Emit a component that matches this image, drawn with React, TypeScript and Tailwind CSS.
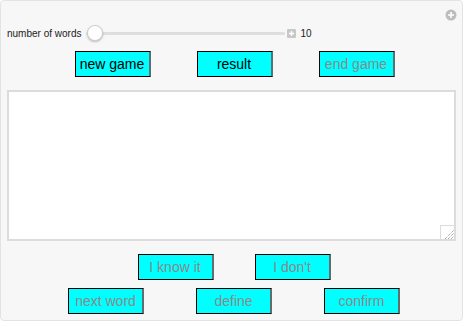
import React from "react";

function Btn({ label, active }: { label: string; active?: boolean }) {
    return (
        <div
            className={`w-[76px] h-[26px] flex items-center justify-center bg-[#00ffff] border border-black border-r-2 border-r-[#5f6f6f] text-[14px] ${active ? "text-black" : "text-[#8a8a8a]"}`}
        >
            {label}
        </div>
    );
}

export default function App() {
    return (
        <div className="w-[464px] h-[322px] bg-white" style={{ fontFamily: '"Liberation Sans", Arial, sans-serif' }}>
            <div className="w-[463px] h-[321px] rounded-[4px] border border-[#e3e3e3] bg-[#f7f7f7] flex flex-col relative">
                <svg className="absolute right-[5px] top-[8px]" width="12" height="12" viewBox="0 0 12 12">
                    <circle cx="6" cy="6" r="5.5" fill="#bdbdbd" />
                    <path d="M6 3v6M3 6h6" stroke="#fff" strokeWidth="1.6" />
                </svg>

                <div className="flex items-center h-[16px] mt-[24px] pl-[6px]">
                    <span className="text-[10px] text-[#222]">number of words</span>
                    <div className="relative w-[199px] h-[16px] ml-[5px] flex items-center">
                        <div className="w-full h-[3px] rounded-full bg-[#dedede]" />
                        <div className="absolute left-[1px] top-0 w-[16px] h-[16px] rounded-full bg-white border border-[#d0d0d0] shadow-[0_1px_2px_rgba(0,0,0,0.25)]" />
                    </div>
                    <svg className="ml-[2px]" width="9" height="9" viewBox="0 0 9 9">
                        <rect width="9" height="9" rx="1" fill="#c8c8c8" />
                        <path d="M4.5 2v5M2 4.5h5" stroke="#fff" strokeWidth="1.3" />
                    </svg>
                    <span className="text-[10px] text-[#222] ml-[4px]">10</span>
                </div>

                <div className="flex justify-center gap-[46px] pl-[6px] mt-[10px]">
                    <Btn label="new game" active />
                    <Btn label="result" active />
                    <Btn label="end game" />
                </div>

                <div className="relative mx-[6px] mt-[13px] h-[151px] bg-white border-2 border-[#dcdcdc]">
                    <div className="absolute right-0 bottom-0 w-[14px] h-[14px] border-l border-t border-[#dcdcdc] flex items-end justify-end">
                        <svg width="12" height="12" viewBox="0 0 12 12">
                            <path d="M3 12L12 3M6 12L12 6M9 12L12 9" stroke="#8a8a8a" strokeWidth="1" strokeDasharray="1 1" />
                        </svg>
                    </div>
                </div>

                <div className="flex justify-center gap-[41px] pl-[5px] mt-[13px]">
                    <Btn label="I know it" />
                    <Btn label="I don't" />
                </div>

                <div className="flex justify-center gap-[52px] pl-[5px] mt-[8px]">
                    <Btn label="next word" />
                    <Btn label="define" />
                    <Btn label="confirm" />
                </div>
            </div>
        </div>
    );
}
